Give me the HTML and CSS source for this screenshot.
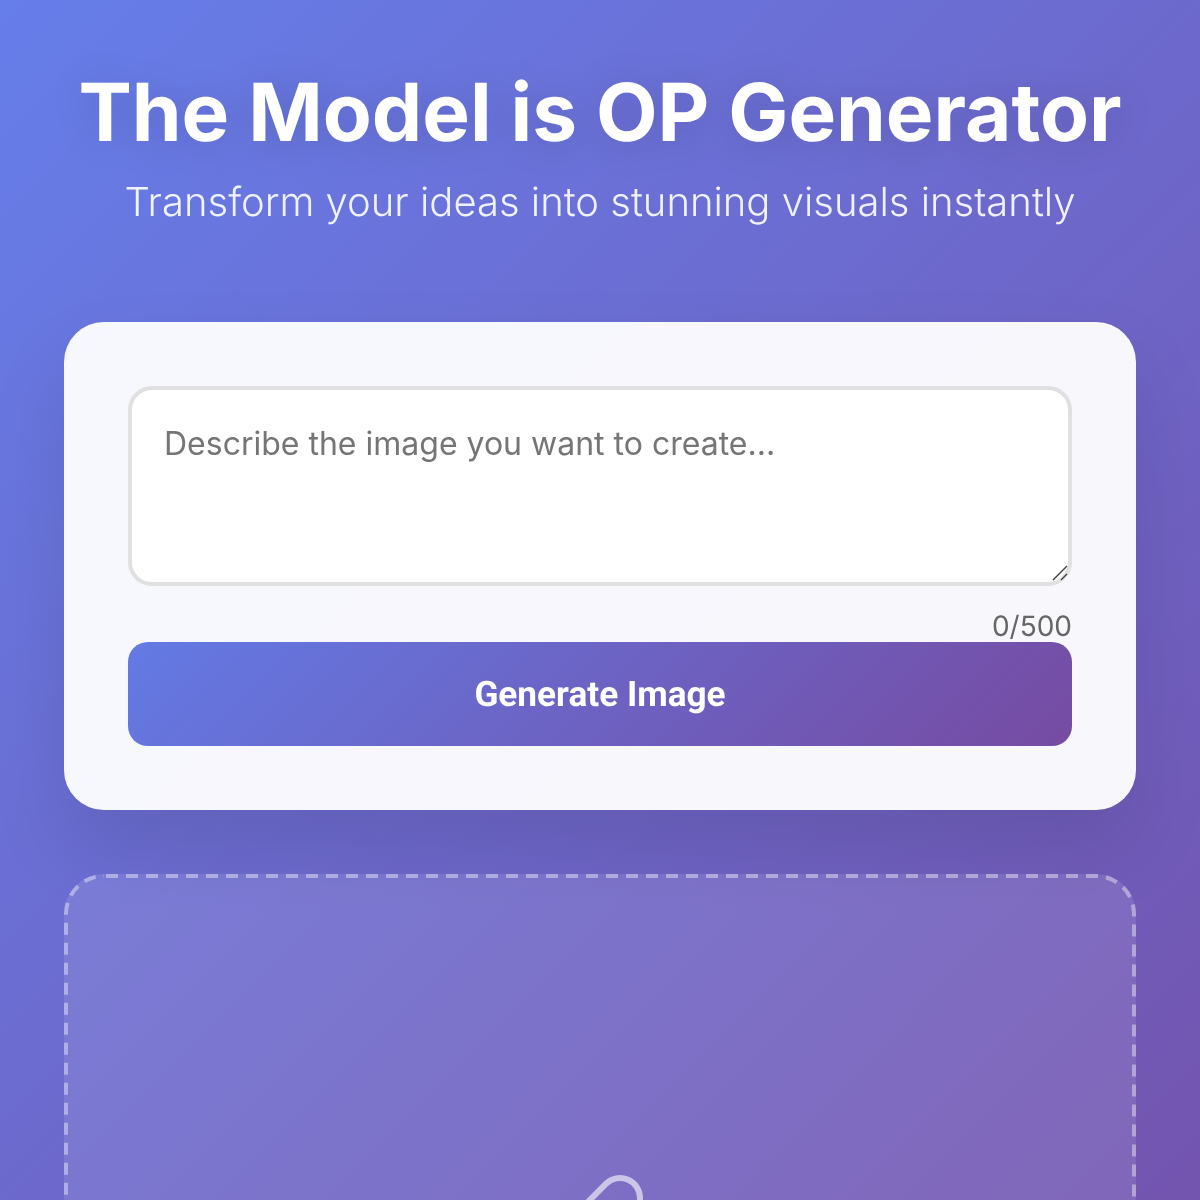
FILE: index.html
```html
<!DOCTYPE html>
<html lang="en">
<head>
<meta charset="utf-8">
<title>The Model is OP Generator</title>
<link rel="stylesheet" href="styles.css">
</head>
<body>
<main class="page">
  <header class="hero">
    <h1 class="title">The Model is OP Generator</h1>
    <p class="subtitle">Transform your ideas into stunning visuals instantly</p>
  </header>
  <section class="card">
    <div class="prompt-wrap">
      <textarea class="prompt" placeholder="Describe the image you want to create..."></textarea>
      <svg class="grip" viewBox="0 0 16 16" fill="none" aria-hidden="true">
        <path class="grip-light" d="M1.5 15.5 L15.5 1.5 M9.5 15.5 L15.5 9.5" />
        <path class="grip-dark" d="M1 15 L15 1 M9 15 L15 9" />
      </svg>
    </div>
    <div class="counter">0/500</div>
    <button class="generate" type="button">Generate Image</button>
  </section>
  <section class="drop">
    <svg class="drop-border" aria-hidden="true">
      <rect class="drop-dash" x="2" y="2" rx="38" ry="38" />
    </svg>
    <svg class="drop-icon" viewBox="0 0 120 120" fill="none" aria-hidden="true">
      <path d="M30 60 L65.86 23.86 A20 20 0 0 1 100 38 V60" />
    </svg>
  </section>
</main>
</body>
</html>
```
FILE: styles.css
```css
* { box-sizing: border-box; }
html {
  overflow: hidden;
  background: linear-gradient(135deg, #667eea 0%, #764ba2 100%);
}
body {
  margin: 0;
  font-family: "Inter", sans-serif;
  text-rendering: geometricPrecision;
}
.page { padding: 64px; will-change: transform; }
.hero { text-align: center; margin-bottom: 96px; }
.title {
  margin: 0 0 17px;
  font-size: 80px;
  line-height: 97px;
  font-weight: 700;
  color: #fff;
  white-space: nowrap;
  text-shadow: 0 4px 40px rgba(0, 0, 0, 0.15);
}
.subtitle {
  margin: 0;
  font-size: 40px;
  line-height: 48px;
  font-weight: 300;
  color: rgba(255, 255, 255, 0.9);
}
.card {
  display: flex;
  flex-direction: column;
  padding: 64px;
  background: rgba(255, 255, 255, 0.95);
  border-radius: 40px;
  box-shadow: 0 40px 80px rgba(0, 0, 0, 0.1);
  margin-bottom: 64px;
}
.prompt-wrap { position: relative; }
.prompt {
  display: block;
  width: 100%;
  height: 200px;
  padding: 32px;
  border: 4px solid #e0e0e0;
  border-radius: 24px;
  background: #fff;
  font-family: "Inter", sans-serif;
  font-size: 32px;
  line-height: 44px;
  outline: none;
  resize: none;
}
.prompt::placeholder { color: #757575; }
.grip {
  position: absolute;
  right: 4px;
  bottom: 5px;
  width: 16px;
  height: 16px;
}
.grip-light { stroke: rgba(255, 255, 255, 0.7); stroke-width: 1.4; }
.grip-dark { stroke: #3c3c3c; stroke-width: 1.4; }
.counter {
  margin-top: 24px;
  text-align: right;
  font-size: 28px;
  line-height: 32px;
  color: #666;
}
.generate {
  height: 104px;
  border: 0;
  border-radius: 20px;
  background: linear-gradient(135deg, #637ae4 0%, #764ba2 100%);
  color: #fff;
  font-family: "Roboto", sans-serif;
  font-size: 35.2px;
  font-weight: 700;
  text-rendering: geometricPrecision;
}
.drop {
  position: relative;
  display: flex;
  justify-content: center;
  height: 800px;
  padding-top: 286px;
  background: rgba(255, 255, 255, 0.1);
  border-radius: 40px;
}
.drop-border {
  position: absolute;
  inset: 0;
  width: 100%;
  height: 100%;
}
.drop-dash {
  width: calc(100% - 4px);
  height: calc(100% - 4px);
  fill: none;
  stroke: rgba(255, 255, 255, 0.4);
  stroke-width: 4;
  stroke-dasharray: 12 8;
  stroke-dashoffset: -2;
}
.drop-icon {
  width: 120px;
  height: 120px;
  stroke: rgba(255, 255, 255, 0.6);
  stroke-width: 6;
  stroke-linecap: round;
}
```
